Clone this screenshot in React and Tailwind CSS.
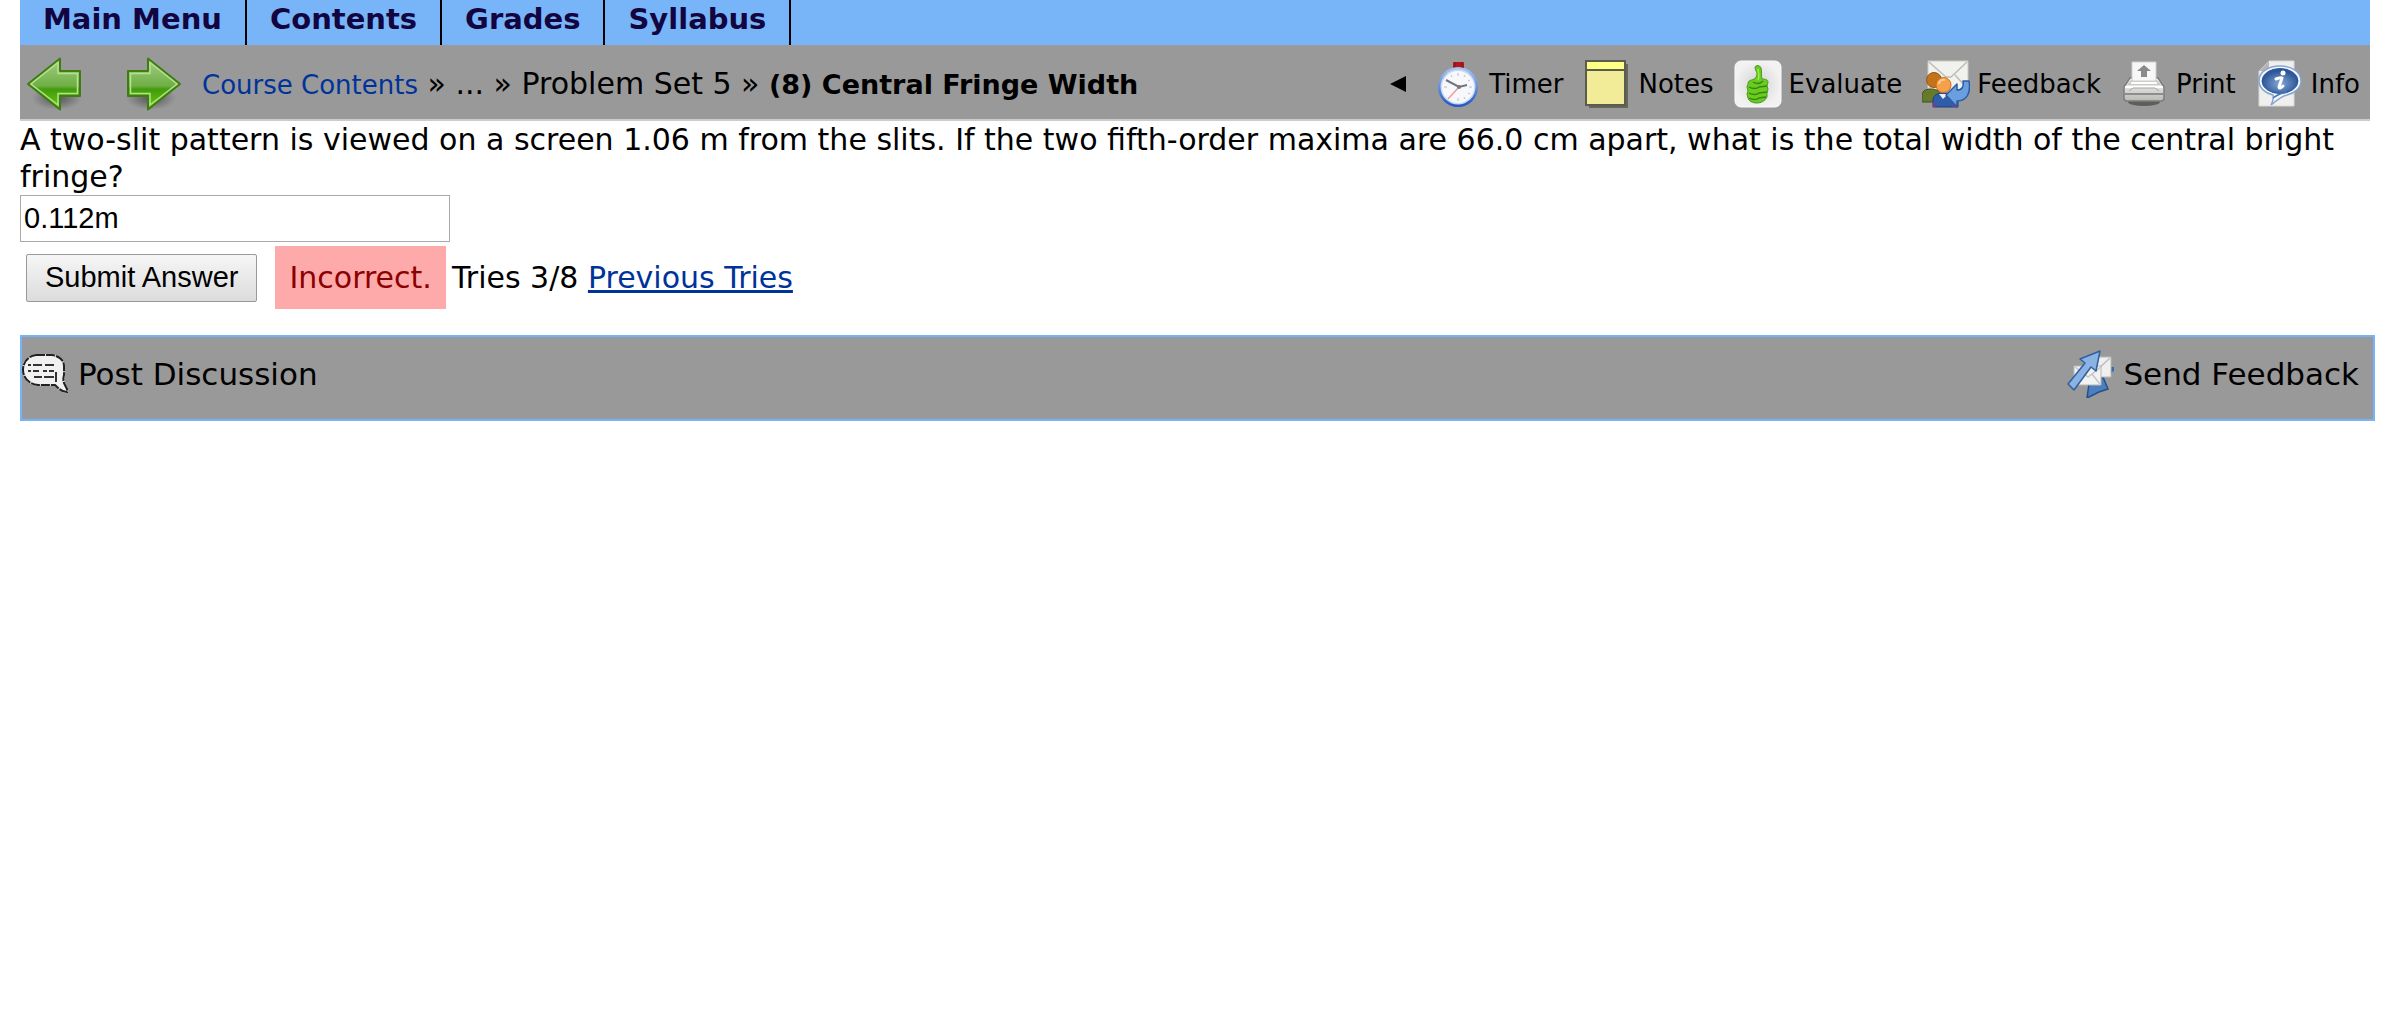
import React, { useState } from 'react';

const ArrowIcon = ({ flip, id }) => (
  <svg viewBox="0 0 56 56" className={flip ? 'w-14 h-14 shrink-0 -scale-x-100' : 'w-14 h-14 shrink-0'} aria-hidden="true">
    <defs>
      <linearGradient id={`${id}-top`} x1="0" y1="0" x2="0" y2="1">
        <stop offset="0" stopColor="#a3cf86" />
        <stop offset="0.54" stopColor="#6fae45" />
        <stop offset="0.6" stopColor="#429c0c" />
        <stop offset="1" stopColor="#66cc0c" />
      </linearGradient>
      <radialGradient id={`${id}-shade`}>
        <stop offset="0" stopColor="#000" stopOpacity="0.45" />
        <stop offset="1" stopColor="#000" stopOpacity="0" />
      </radialGradient>
    </defs>
    <ellipse cx="31" cy="42" rx="25" ry="12" fill={`url(#${id}-shade)`} />
    <path d="M34 2.5V15h20v25H34v13.500L2 28z" fill={`url(#${id}-top)`} stroke="#3f7d12" strokeWidth="2" strokeLinejoin="round" />
    <path d="M32 6.500V17.500h19.500v20H32v11.500L5 28z" fill="none" stroke="#b5e08f" strokeWidth="1.500" />
  </svg>
);

const TimerIcon = () => (
  <svg viewBox="0 0 48 48" className="w-12 h-12 shrink-0" aria-hidden="true">
    <defs>
      <linearGradient id="timer-ring" x1="0" y1="0" x2="0" y2="1">
        <stop offset="0" stopColor="#a9c8f2" />
        <stop offset="1" stopColor="#1f55c4" />
      </linearGradient>
    </defs>
    <rect x="19" y="2" width="11" height="7" rx="1" fill="#b0171f" />
    <path d="M21 2v6M28 2v6" stroke="#8c1015" strokeWidth="1" />
    <circle cx="24" cy="27" r="20" fill="url(#timer-ring)" />
    <circle cx="24" cy="27" r="17.500" fill="#c9dbf5" />
    <circle cx="24" cy="27" r="16" fill="#f8f8fb" />
    <path d="M24 13v3M24 38v3M10 27h3M35 27h3M17 15l1 2M31 15l-1 2M36 20l-2 1M36 34l-2-1M31 39l-1-2" stroke="#b7bccb" strokeWidth="1" />
    <path d="M25 27L14 39" stroke="#f39a97" strokeWidth="1.500" />
    <path d="M12 20l13 7 8-2" fill="none" stroke="#6f7480" strokeWidth="2" />
    <circle cx="25" cy="27" r="2" fill="#777" />
  </svg>
);

const NotesIcon = () => (
  <svg viewBox="0 0 48 48" className="w-12 h-12 shrink-0" aria-hidden="true">
    <path d="M6 4h39v44H6z" fill="#65655a" />
    <rect x="3" y="1" width="39" height="44" fill="#f2ec98" stroke="#5b5b50" strokeWidth="2" />
    <rect x="4" y="2" width="37" height="7" fill="#ffff85" />
    <path d="M3 10h39" stroke="#5b5b50" strokeWidth="2" />
  </svg>
);

const EvaluateIcon = () => (
  <svg viewBox="0 0 48 48" className="w-12 h-12 shrink-0" aria-hidden="true">
    <defs>
      <radialGradient id="eval-bg">
        <stop offset="0" stopColor="#d2d2d2" />
        <stop offset="1" stopColor="#f2f2f2" />
      </radialGradient>
    </defs>
    <rect x="1" y="1" width="46" height="46" rx="6" fill="url(#eval-bg)" stroke="#fafafa" strokeWidth="1" />
    <path d="M21 7c1-2 5-2 6 1 1 4 0 8 1 11 4 0 6 1 6 3l-1 4 1 3-1 4v4c-2 4-6 6-10 6-5 0-8-2-9-5l-1-4 1-3-1-4 1-3c0-3 2-4 4-4 3-1 5-3 5-6 0-2-2-4-2-7z" fill="#69cc1e" stroke="#4a9a20" strokeWidth="1" />
    <path d="M15 27c3 2 8 2 10 0l8-1M15 33c3 2 8 2 10 0l8-1M15 38c3 2 8 2 10 0l7-1M19 22c3 2 7 2 10-1" fill="none" stroke="#3c8418" strokeWidth="1.500" />
    <path d="M24 9c0 4 2 7 0 11" fill="none" stroke="#98ee4c" strokeWidth="1.500" />
  </svg>
);

const FeedbackIcon = () => (
  <svg viewBox="0 0 48 48" className="w-12 h-12 shrink-0" aria-hidden="true">
    <path d="M6 1h40v31H6z" fill="#f1f1ee" stroke="#c9c9c4" strokeWidth="1" />
    <path d="M7 2l17 15h5L45 2M7 29l12-13M45 28L33 15" fill="none" stroke="#bdbdb8" strokeWidth="1.500" />
    <path d="M0 42V35c1-5 4-6 10-6 5 0 9 3 9 8v5z" fill="#667a2a" stroke="#43521a" strokeWidth="1" />
    <circle cx="12" cy="20" r="7.500" fill="#c2731b" stroke="#98540c" strokeWidth="1" />
    <path d="M11 47V39c1-4 4-6 11-6s12 3 14 8v6z" fill="#2f5da8" stroke="#1f3f7d" strokeWidth="1" />
    <path d="M11 41l4 6h-4zM30 47l4-6 2 6z" fill="#7a3a8a" />
    <path d="M17 34l4 5 5-5z" fill="#e9eef8" />
    <circle cx="21.500" cy="25" r="7.500" fill="#f5a04a" stroke="#cf6d12" strokeWidth="1" />
    <path d="M17 24c0-3 3-5 6-4" fill="none" stroke="#ffcf94" strokeWidth="2" />
    <path d="M35 24v6c5 0 7-3 6-9h6c2 12-2 20-12 20v6L24 35z" fill="#6a9ede" stroke="#2c5ba5" strokeWidth="1.500" strokeLinejoin="round" />
  </svg>
);

const PrintIcon = () => (
  <svg viewBox="0 0 48 48" className="w-12 h-12 shrink-0" aria-hidden="true">
    <defs>
      <linearGradient id="print-body" x1="0" y1="0" x2="0" y2="1">
        <stop offset="0" stopColor="#fafafa" />
        <stop offset="1" stopColor="#b9b9b6" />
      </linearGradient>
    </defs>
    <ellipse cx="23" cy="42" rx="16" ry="4" fill="#4e4e4e" opacity="0.8" />
    <path d="M9 18h28l6 9v11c0 2-1 3-3 3H6c-2 0-3-1-3-3V27z" fill="url(#print-body)" stroke="#7d7d7a" strokeWidth="1.500" />
    <path d="M10 20h26l4 5H6z" fill="#c9c9c6" />
    <path d="M11 2h24v19H11z" fill="#f7f7f7" stroke="#cfcfcf" strokeWidth="1" />
    <path d="M23 5l7 6h-4v6h-6v-6h-4z" fill="#8a8a8a" />
    <path d="M4 27h38M10 23h26" stroke="#fff" strokeWidth="2" />
    <path d="M8 31l4-3h22l4 3" fill="none" stroke="#a5a5a2" strokeWidth="1" />
    <path d="M4 34h38" stroke="#8d8d8a" strokeWidth="2" />
  </svg>
);

const InfoIcon = () => (
  <svg viewBox="0 0 48 48" className="w-12 h-12 shrink-0" aria-hidden="true">
    <defs>
      <radialGradient id="info-fill" cx="0.5" cy="0.6">
        <stop offset="0" stopColor="#86a8d6" />
        <stop offset="1" stopColor="#2b5798" />
      </radialGradient>
    </defs>
    <path d="M13 1h25v45H3V11z" fill="#efefed" stroke="#d8d8d5" strokeWidth="1" />
    <path d="M3 11h10V1z" fill="#b6b6b3" />
    <path d="M24 6c12 0 21 6 21 15 0 7-6 12-14 14-5 1-9 4-16 10 2-4 3-7 2-10C9 33 3 28 3 21 3 12 12 6 24 6z" fill="#f7f9fc" stroke="#86a5d3" strokeWidth="1.500" />
    <ellipse cx="24" cy="21" rx="18" ry="12.500" fill="url(#info-fill)" stroke="#2b5798" strokeWidth="1" />
    <path d="M17 38c4-3 9-5 14-6" fill="none" stroke="#4a74b4" strokeWidth="1.500" />
    <circle cx="27" cy="13" r="2.500" fill="#fff" />
    <path d="M20 19c3-1 5-2 6-1l-3 9c0 2 2 1 4-1" fill="none" stroke="#fff" strokeWidth="3" strokeLinecap="round" />
  </svg>
);

const DiscussionIcon = () => (
  <svg viewBox="0 0 48 48" className="w-12 h-12 shrink-0" aria-hidden="true">
    <path d="M14 5h16c7 1 12 5 12 11v9c-1 3-1 5 0 8l3 6v3c-5 0-8-3-12-7H16C7 34 1 28 1 20 1 12 6 6 14 5z" fill="#f1f1f1" stroke="#e8e8e8" strokeWidth="2" />
    <path d="M14 5h16c7 1 12 5 12 11v9c-1 3-1 5 0 8l3 6v3c-5 0-8-3-12-7H16C7 34 1 28 1 20 1 12 6 6 14 5z" fill="none" stroke="#222" strokeWidth="2" strokeDasharray="9 1" />
    <path d="M6 15h3M11 15h9M23 15h9M6 21h3M11 21h6M21 21h4M27 21h5M12 27h8M22 27h10M34 22v10" fill="none" stroke="#333" strokeWidth="2" />
  </svg>
);

const SendIcon = () => (
  <svg viewBox="0 0 48 48" className="w-12 h-12 shrink-0" aria-hidden="true">
    <path d="M42 17h5v4l-5 3z" fill="#3c6cab" />
    <path d="M36 27l5 12-9 3-12 6 2-14z" fill="#4c7fbd" stroke="#24508c" strokeWidth="1.500" />
    <path d="M17 7h27v20H17z" fill="#efefef" stroke="#b8b8b8" strokeWidth="1" />
    <path d="M18 8l13 11L43 8" fill="none" stroke="#bdbdbd" strokeWidth="1.500" />
    <path d="M7 16h27v19H7z" fill="#f2f2f2" stroke="#b8b8b8" strokeWidth="1" />
    <path d="M8 17l13 10 13-10M8 34l9-10M33 34l-8-10" fill="none" stroke="#c4c4c4" strokeWidth="1.500" />
    <path d="M33 1l-4 20-5-4L7 40l-6-6 17-21-5-4z" fill="#8ab2e2" stroke="#315f9f" strokeWidth="1.500" strokeLinejoin="round" />
  </svg>
);

const menuItems = ['Main Menu', 'Contents', 'Grades', 'Syllabus'];

const tools = [
  { label: 'Timer', icon: TimerIcon },
  { label: 'Notes', icon: NotesIcon },
  { label: 'Evaluate', icon: EvaluateIcon },
  { label: 'Feedback', icon: FeedbackIcon },
  { label: 'Print', icon: PrintIcon },
  { label: 'Info', icon: InfoIcon },
];

const App = () => {
  const [answer, setAnswer] = useState('0.112m');

  return (
    <div className="min-h-screen bg-white text-black pl-5 font-['Verdana','DejaVu_Sans',sans-serif] text-[30px] leading-[37px]">
      <header className="mr-[11px]">
        {/* Main menu */}
        <nav className="flex h-[45px] bg-[#77b5f8] text-[29px] leading-[39px]">
          {menuItems.map((item) => (
            <a
              key={item}
              href="#"
              className="border-r-2 border-black px-[23px] font-bold text-[#120540]"
            >
              {item}
            </a>
          ))}
        </nav>

        {/* Breadcrumbs and tools */}
        <div className="flex items-center justify-between h-[76px] bg-[#999999] border-b-2 border-[#cccccc] pt-1 pl-[6px] pr-[10px] whitespace-nowrap">
          <div className="flex items-center">
            <a href="#" aria-label="Previous"><ArrowIcon id="prev" /></a>
            <a href="#" aria-label="Next" className="ml-11"><ArrowIcon id="next" flip /></a>
            <div className="ml-5">
              <a href="#" className="text-[26px] text-[#003399]">Course Contents</a>
              {' » ... » Problem Set 5 » '}
              <strong className="text-[27px]">(8) Central Fringe Width</strong>
            </div>
          </div>
          <div className="flex items-center gap-5 text-[26px]">
            <button type="button" aria-label="Collapse tools" className="mr-2">
              <svg viewBox="0 0 16 16" className="w-4 h-4" aria-hidden="true">
                <path d="M16 0v16L0 8z" fill="#000" />
              </svg>
            </button>
            {tools.map((tool) => {
              const Icon = tool.icon;
              return (
                <a key={tool.label} href="#" className="flex items-center gap-[7px]">
                  <Icon />
                  {tool.label}
                </a>
              );
            })}
          </div>
        </div>
      </header>

      {/* Problem */}
      <main className="mr-[6px]">
        <form onSubmit={(e) => e.preventDefault()}>
          <label htmlFor="answer" className="block">
            A two-slit pattern is viewed on a screen 1.06 m from the slits. If the two fifth-order maxima are 66.0 cm apart, what is the total width of the central bright fringe?
          </label>
          <input
            id="answer"
            type="text"
            value={answer}
            onChange={(e) => setAnswer(e.target.value)}
            className="block w-[430px] h-[47px] border border-[#a9a9a9] px-[3px] font-['Liberation_Sans',sans-serif] text-[29px]"
          />
          <div className="flex items-center mt-1 pl-[6px]">
            <button
              type="submit"
              className="h-12 px-[18px] border border-[#999999] rounded-xs bg-linear-to-b from-[#f6f6f6] to-[#dcdcdc] font-['Liberation_Sans',sans-serif] text-[29px]"
            >
              Submit Answer
            </button>
            <span className="ml-[18px] bg-[#ffaaaa] px-[14px] py-[13px] text-[#8b0000]">Incorrect.</span>
            <span className="ml-[6px]">
              Tries 3/8 <a href="#" className="text-[#003399] underline">Previous Tries</a>
            </span>
          </div>
        </form>

        {/* Discussion bar */}
        <div className="flex items-start justify-between mt-[26px] h-[86px] bg-[#999999] border-2 border-[#73b4fb] pt-[13px] pr-[14px] text-[31px]">
          <a href="#" className="flex items-center gap-2">
            <DiscussionIcon />
            Post Discussion
          </a>
          <a href="#" className="flex items-center gap-2">
            <SendIcon />
            Send Feedback
          </a>
        </div>
      </main>
    </div>
  );
};

export default App;
